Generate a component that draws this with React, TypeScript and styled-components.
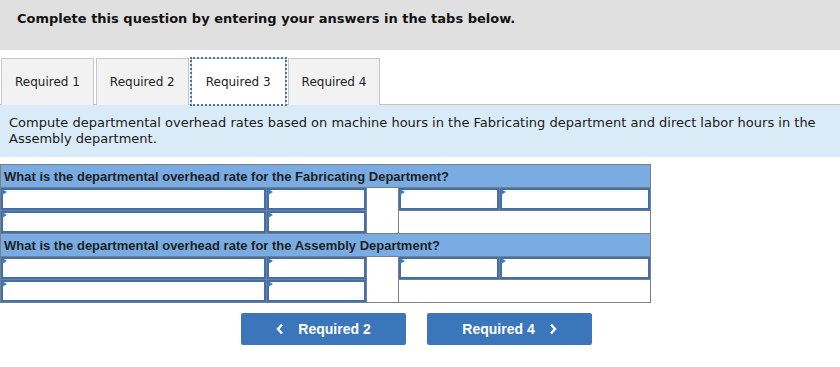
import React from "react";
import styled, { createGlobalStyle } from "styled-components";

const GlobalStyle = createGlobalStyle`
  body {
    margin: 0;
    background: #ffffff;
    font-family: "DejaVu Sans", Verdana, sans-serif;
  }
`;

//상단 안내 문구
const Banner = styled.div`
  height: 50px;
  box-sizing: border-box;
  padding: 11px 0 0 17px;
  background: #e0e0e0;
  font-family: "DejaVu Sans", Verdana, sans-serif;
  font-weight: 700;
  font-size: 13px;
  color: #111111;
`;

const TabBar = styled.div`
  display: flex;
  gap: 2px;
  margin-top: 8px;
  padding-left: 1px;
  border-bottom: 1px solid #c4c4c4;
`;

const Tab = styled.button<{ $active?: boolean }>`
  height: 47px;
  box-sizing: border-box;
  padding: 0 ${(p) => (p.$active ? "14px" : "13px")};
  margin-bottom: -1px;
  border: 1px solid #c8c8c8;
  border-bottom: none;
  background: ${(p) => (p.$active ? "#ffffff" : "#f2f2f2")};
  outline: ${(p) => (p.$active ? "2px dotted #3f74b8" : "none")};
  outline-offset: -1px;
  font-family: "DejaVu Sans", Verdana, sans-serif;
  font-size: 12px;
  color: #222222;
  cursor: pointer;
`;

const Instructions = styled.div`
  background: #daebf8;
  padding: 10px 9px 10px;
  font-family: "DejaVu Sans", Verdana, sans-serif;
  font-size: 13px;
  line-height: 16px;
  color: #1a1a1a;
`;

const Grid = styled.table`
  margin-top: 7px;
  width: 651px;
  border-collapse: collapse;
  table-layout: fixed;
  border: 1px solid #7f7f7f;
`;

const QuestionCell = styled.td`
  height: 22px;
  padding: 0 0 0 3px;
  background: #79ace3;
  border: 1px solid #7f7f7f;
  font-family: "Liberation Sans", Arial, sans-serif;
  font-weight: 700;
  font-size: 13px;
  color: #1f1f1f;
`;

const Cell = styled.td<{ $rule?: boolean }>`
  height: 22px;
  padding: 0;
  border: 1px solid #7f7f7f;
  border-top: 1px solid ${(p) => (p.$rule ? "#000000" : "#7f7f7f")};
  vertical-align: top;
`;

//입력칸 + 왼쪽 위 작은 삼각형
const Entry = styled.div`
  position: relative;
  height: 22px;
  box-sizing: border-box;
  border: 2px solid #3e6fb0;
  background: #ffffff;

  &::before {
    content: "";
    position: absolute;
    left: -1px;
    top: -1px;
    border-top: 3px solid transparent;
    border-bottom: 3px solid transparent;
    border-left: 5px solid #3e7cc4;
  }
`;

const Nav = styled.div`
  display: flex;
  gap: 21px;
  margin: 10px 0 0 241px;
`;

const NavButton = styled.button`
  width: 165px;
  height: 32px;
  display: flex;
  align-items: center;
  justify-content: center;
  gap: 14px;
  border: none;
  border-radius: 2px;
  background: #3b76bb;
  color: #ffffff;
  font-family: "Liberation Sans", Arial, sans-serif;
  font-weight: 700;
  font-size: 14px;
  cursor: pointer;
`;

const Chevron = ({ dir }: { dir: "left" | "right" }) => (
  <svg width="8" height="12" viewBox="0 0 8 12">
    <polyline
      points={dir === "left" ? "6,1.5 2,6 6,10.5" : "2,1.5 6,6 2,10.5"}
      fill="none"
      stroke="#ffffff"
      strokeWidth="2.4"
    />
  </svg>
);

const QuestionBlock = ({ text }: { text: string }) => (
  <>
    <tr>
      <QuestionCell colSpan={5}>{text}</QuestionCell>
    </tr>
    <tr>
      <Cell><Entry /></Cell>
      <Cell><Entry /></Cell>
      <Cell rowSpan={2} />
      <Cell><Entry /></Cell>
      <Cell><Entry /></Cell>
    </tr>
    <tr>
      <Cell $rule><Entry /></Cell>
      <Cell $rule><Entry /></Cell>
      <Cell colSpan={2} />
    </tr>
  </>
);

const App = () => {
  const tabs = ["Required 1", "Required 2", "Required 3", "Required 4"];
  return (
    <>
      <GlobalStyle />
      <Banner>Complete this question by entering your answers in the tabs below.</Banner>

      <TabBar>
        {tabs.map((t) => (
          <Tab key={t} $active={t === "Required 3"}>
            {t}
          </Tab>
        ))}
      </TabBar>

      <Instructions>
        Compute departmental overhead rates based on machine hours in the Fabricating department and
        direct labor hours in the Assembly department.
      </Instructions>

      <Grid>
        <colgroup>
          <col style={{ width: 266 }} />
          <col style={{ width: 100 }} />
          <col style={{ width: 32 }} />
          <col style={{ width: 101 }} />
          <col style={{ width: 151 }} />
        </colgroup>
        <tbody>
          <QuestionBlock text="What is the departmental overhead rate for the Fabricating Department?" />
          <QuestionBlock text="What is the departmental overhead rate for the Assembly Department?" />
        </tbody>
      </Grid>

      <Nav>
        <NavButton>
          <Chevron dir="left" />
          Required 2
        </NavButton>
        <NavButton>
          Required 4
          <Chevron dir="right" />
        </NavButton>
      </Nav>
    </>
  );
};

export default App;
